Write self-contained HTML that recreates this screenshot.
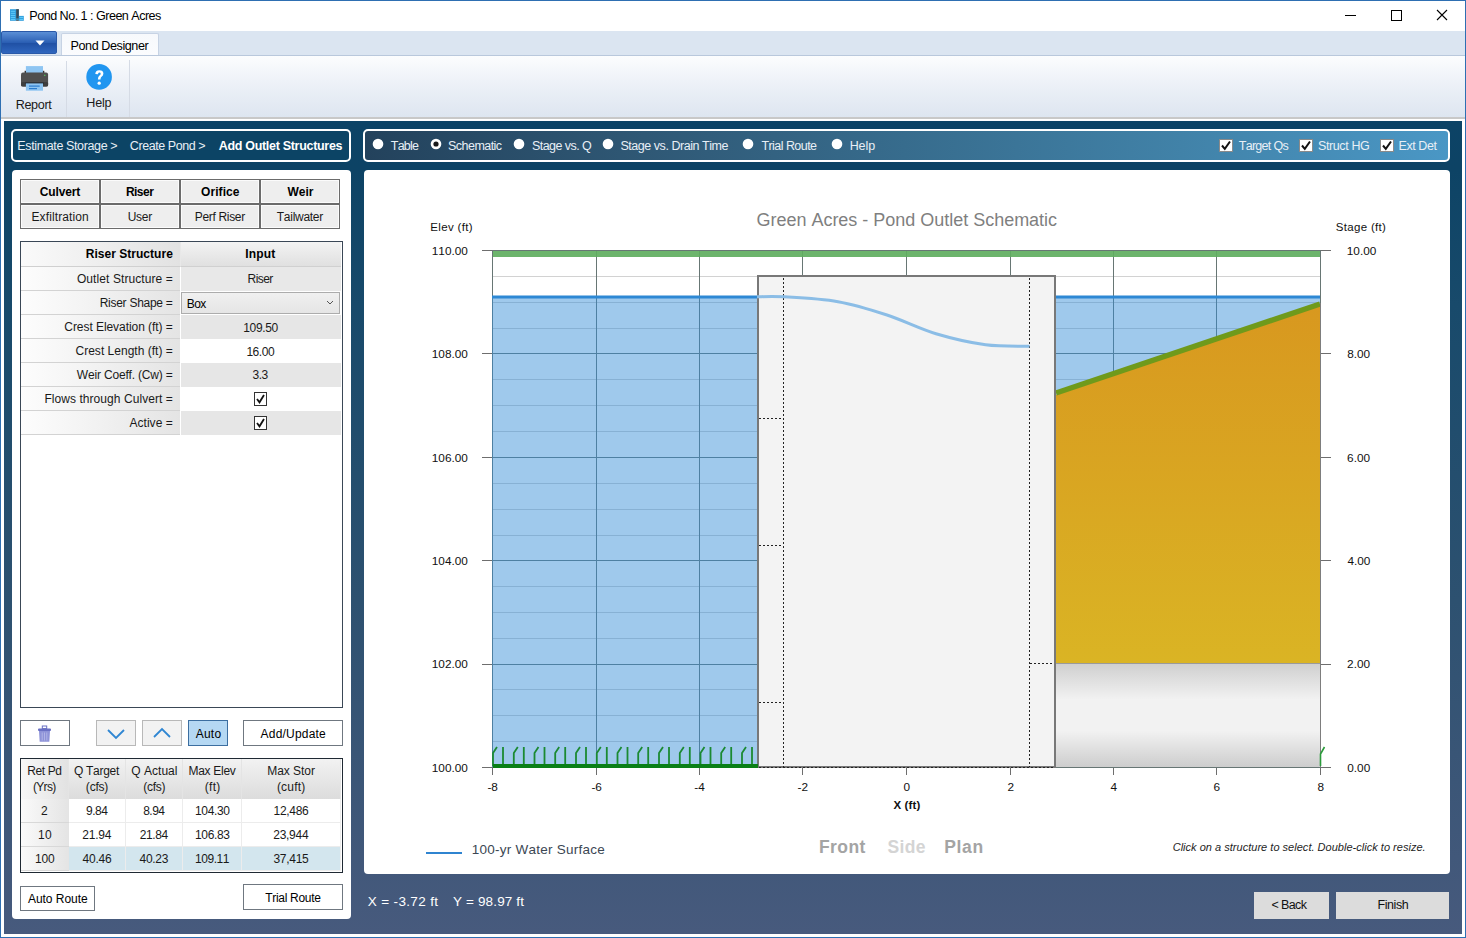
<!DOCTYPE html>
<html><head><meta charset="utf-8">
<style>
*{box-sizing:border-box;margin:0;padding:0}
html,body{width:1466px;height:938px;overflow:hidden;background:#fff}
body{position:relative;font-family:"Liberation Sans",sans-serif;font-size:12px;color:#000}
.a{position:absolute}
#win{left:0;top:0;width:1466px;height:938px;border:1px solid #2e6fb2;background:#fff}
#tabrow{left:1px;top:31px;width:1464px;height:24px;background:#dbe5f1}
#ribbon{left:1px;top:55px;width:1464px;height:63px;background:linear-gradient(#fcfdfe,#eef2f8 40%,#dde5f0);border-top:1px solid #b9c8dc}
#navy{left:4px;top:121px;width:1458px;height:813px;background:linear-gradient(#0c4366 0%,#0d4365 6%,#184a6b 22.6%,#2d5170 59%,#475a7d 100%)}
.crumb{border:2px solid #fff;border-radius:5px}
.panel{background:#fff;border-radius:4px}
.sb{position:absolute;background:#eeeeee}
.pl{position:absolute;left:21px;width:159px;height:24px;background:linear-gradient(90deg,#fdfdfd,#f1f1f1 50%,#e4e4e4);border-bottom:1px solid #d3d3d3}
.pv{position:absolute;left:181px;width:160px;height:24px}
.hd{background:linear-gradient(90deg,#fafafa,#eeeeee 50%,#e2e2e2);border-bottom:1px solid #d0d0d0}
.hdv{background:linear-gradient(#f3f3f3,#e0e0e0);border-bottom:1px solid #d0d0d0;left:180px;border-left:1px solid #e8e8e8;width:161px}
.rh{position:absolute;top:759px;height:40px;background:linear-gradient(#f2f2f2,#dcdcdc);border-right:1px solid #e4e4e4}
.rk{position:absolute;left:21px;width:48px;height:24px;background:linear-gradient(90deg,#fafafa,#e4e4e4);border-bottom:1px solid #d8d8d8}
.rc{position:absolute;height:24px;border-right:1px solid #ececec;border-bottom:1px solid #ececec}
.sel{background:#d3e6ee}
.btn{position:absolute;border:1px solid #adadad;background:#fff}
svg text{font-family:"Liberation Sans",sans-serif;font-kerning:none;font-variant-ligatures:none;white-space:pre}
</style></head><body>
<div id="win" class="a"></div>
<svg class="a" style="left:0;top:0" width="30" height="30" viewBox="0 0 30 30">
<rect x="10" y="9.2" width="6.1" height="11.6" fill="#2f9ddc"/>
<path d="M10.8 11.3H15.3M10.8 13.3H15.3M10.8 15.4H15.3M10.8 17.4H15.3M10.8 19.4H15.3" stroke="#62cdfb" stroke-width="1"/>
<rect x="16.1" y="9.1" width="2.8" height="11.7" fill="#2c4b5e"/>
<rect x="18.9" y="15.9" width="4.9" height="4.9" fill="#2f9ddc"/>
<path d="M19.4 17.4H23.3M19.4 19.4H23.3" stroke="#62cdfb" stroke-width="1"/>
<rect x="16.1" y="18.5" width="2.8" height="1.3" fill="#3a9fd4"/>
</svg>
<div class="a" style="left:1345px;top:15px;width:11px;height:1px;background:#000"></div>
<div class="a" style="left:1391px;top:10px;width:11px;height:11px;border:1px solid #000"></div>
<svg class="a" style="left:1436px;top:9px" width="12" height="12" viewBox="0 0 12 12"><path d="M1 1L11 11M11 1L1 11" stroke="#000" stroke-width="1.1"/></svg>
<div id="tabrow" class="a"></div>
<div class="a" style="left:1px;top:31px;width:56px;height:23px;background:linear-gradient(#5b8fd6,#2b5fb4 50%,#1f4fa3 51%,#2f66be);border:1px solid #2a59a8;border-radius:2px"></div>
<svg class="a" style="left:35px;top:40px" width="10" height="6" viewBox="0 0 10 6"><path d="M0.5 0.5H9.5L5 5.5Z" fill="#fff"/></svg>
<div class="a" style="left:61px;top:33px;width:98px;height:23px;background:linear-gradient(#f7f9fc,#fbfcfe);border:1px solid #c7d3e4;border-bottom:none;border-radius:2px 2px 0 0"></div>
<div id="ribbon" class="a"></div>
<div class="a" style="left:66px;top:61px;width:1px;height:57px;background:#d5dbe5"></div>
<div class="a" style="left:129px;top:60px;width:1px;height:58px;background:#d5dbe5"></div>
<div class="a" style="left:1px;top:117px;width:1464px;height:2px;background:#c8c8c8"></div>
<div class="a" style="left:1px;top:119px;width:1464px;height:2px;background:#fff"></div>
<svg class="a" style="left:0;top:50px" width="130" height="50" viewBox="0 50 130 50">
<rect x="25.9" y="66.1" width="17.1" height="8" fill="#8ec5f2"/>
<rect x="24.6" y="70.8" width="1.4" height="2.5" fill="#333"/><rect x="42.9" y="70.8" width="1.4" height="2.5" fill="#333"/>
<path d="M23 72.6H46.1Q48.1 72.6 48.1 74.6V84.6Q48.1 86.6 46.1 86.6H23Q21 86.6 21 84.6V74.6Q21 72.6 23 72.6Z" fill="#4f4f4f"/>
<rect x="21" y="82" width="27.1" height="4.6" rx="1.5" fill="#3e3e3e"/>
<rect x="25.2" y="82.6" width="18.6" height="1.2" fill="#1e2a36"/>
<rect x="44.1" y="74.7" width="1.3" height="1.3" fill="#4fbf5a"/>
<rect x="25.9" y="83.4" width="17.1" height="7.3" fill="#8ec5f2"/>
<rect x="29" y="85.5" width="10.7" height="1.2" fill="#2b7bcc"/><rect x="29" y="88" width="8" height="1.2" fill="#2b7bcc"/>
<circle cx="99.1" cy="76.9" r="12.8" fill="#2196f0"/>
<path d="M95.3 74.1Q95.3 70.2 99.3 70.2Q103.4 70.2 103.4 73.6Q103.4 75.7 101.3 77Q100.5 77.6 100.5 79.6H97.9Q97.9 76.7 99.5 75.6Q100.7 74.8 100.7 73.7Q100.7 72.6 99.3 72.6Q98 72.6 98 74.3Z" fill="#fff"/>
<circle cx="99.2" cy="83.2" r="1.65" fill="#fff"/>
</svg>
<div id="navy" class="a"></div>
<div class="a crumb" style="left:11px;top:129px;width:340px;height:33px;background:#0c4465"></div>
<div class="a crumb" style="left:363px;top:129px;width:1087px;height:33px;background:linear-gradient(90deg,#23425c 0%,#2f5875 25.8%,#376c8d 49.8%,#4182a8 75.4%,#4a97c5 100%)"></div>
<svg class="a" style="left:372px;top:138px" width="12" height="12" viewBox="0 0 12 12"><circle cx="6" cy="6" r="5.3" fill="#fff"/></svg>
<svg class="a" style="left:430px;top:138px" width="12" height="12" viewBox="0 0 12 12"><circle cx="6" cy="6" r="5.3" fill="#fff"/><circle cx="6" cy="6" r="2.6" fill="#1a1a1a"/></svg>
<svg class="a" style="left:513px;top:138px" width="12" height="12" viewBox="0 0 12 12"><circle cx="6" cy="6" r="5.3" fill="#fff"/></svg>
<svg class="a" style="left:602px;top:138px" width="12" height="12" viewBox="0 0 12 12"><circle cx="6" cy="6" r="5.3" fill="#fff"/></svg>
<svg class="a" style="left:742px;top:138px" width="12" height="12" viewBox="0 0 12 12"><circle cx="6" cy="6" r="5.3" fill="#fff"/></svg>
<svg class="a" style="left:831px;top:138px" width="12" height="12" viewBox="0 0 12 12"><circle cx="6" cy="6" r="5.3" fill="#fff"/></svg>
<svg class="a" style="left:1219px;top:139px" width="14" height="13" viewBox="0 0 14 13"><rect x="0.5" y="0.5" width="13" height="12" fill="#fff" stroke="#8a8a8a"/><path d="M3 6.5L5.8 9.8L11 2.5" fill="none" stroke="#111" stroke-width="2"/></svg>
<svg class="a" style="left:1299px;top:139px" width="14" height="13" viewBox="0 0 14 13"><rect x="0.5" y="0.5" width="13" height="12" fill="#fff" stroke="#8a8a8a"/><path d="M3 6.5L5.8 9.8L11 2.5" fill="none" stroke="#111" stroke-width="2"/></svg>
<svg class="a" style="left:1380px;top:139px" width="14" height="13" viewBox="0 0 14 13"><rect x="0.5" y="0.5" width="13" height="12" fill="#fff" stroke="#8a8a8a"/><path d="M3 6.5L5.8 9.8L11 2.5" fill="none" stroke="#111" stroke-width="2"/></svg>
<div class="a panel" style="left:12px;top:170px;width:339px;height:749px"></div>
<div class="a" style="left:20px;top:179px;width:320px;height:50px;background:#6b6b6b"></div>
<div class="sb" style="left:21px;top:180px;width:78px;height:23px;border:1px solid #fbfbfb"></div>
<div class="sb" style="left:21px;top:205px;width:78px;height:23px;border:1px solid #fbfbfb"></div>
<div class="sb" style="left:101px;top:180px;width:78px;height:23px;border:1px solid #fbfbfb"></div>
<div class="sb" style="left:101px;top:205px;width:78px;height:23px;border:1px solid #fbfbfb"></div>
<div class="sb" style="left:181px;top:180px;width:78px;height:23px;border:1px solid #fbfbfb"></div>
<div class="sb" style="left:181px;top:205px;width:78px;height:23px;border:1px solid #fbfbfb"></div>
<div class="sb" style="left:261px;top:180px;width:78px;height:23px;border:1px solid #fbfbfb"></div>
<div class="sb" style="left:261px;top:205px;width:78px;height:23px;border:1px solid #fbfbfb"></div>
<div class="a" style="left:20px;top:241px;width:323px;height:467px;border:1px solid #3a4756;background:#fff"></div>
<div class="pl hd" style="top:242px;height:25px"></div>
<div class="pv hdv" style="top:242px;height:25px"></div>
<div class="pl" style="top:267px"></div>
<div class="pv" style="top:267px;background:#e8e8e8"></div>
<div class="pl" style="top:291px"></div>
<div class="pv" style="top:291px;background:#fff"></div>
<div class="a" style="left:181px;top:292px;width:159px;height:22px;border:1px solid #acacac;background:linear-gradient(#f0f0f0,#e5e5e5)"></div>
<svg class="a" style="left:326px;top:300px" width="8" height="5" viewBox="0 0 8 5"><path d="M1 1L4 4L7 1" fill="none" stroke="#555" stroke-width="1"/></svg>
<div class="pl" style="top:315px"></div>
<div class="pv" style="top:315px;background:#e6e6e6"></div>
<div class="pl" style="top:339px"></div>
<div class="pv" style="top:339px;background:#fff"></div>
<div class="pl" style="top:363px"></div>
<div class="pv" style="top:363px;background:#e6e6e6"></div>
<div class="pl" style="top:387px"></div>
<div class="pv" style="top:387px;background:#fff"></div>
<div class="pl" style="top:411px"></div>
<div class="pv" style="top:411px;background:#e6e6e6"></div>
<svg class="a" style="left:254px;top:392px" width="13" height="14" viewBox="0 0 13 14"><rect x="0.5" y="0.5" width="12" height="13" fill="#fff" stroke="#333"/><path d="M3 7L5.5 10.3L10 3" fill="none" stroke="#111" stroke-width="1.8"/></svg>
<svg class="a" style="left:254px;top:416px" width="13" height="14" viewBox="0 0 13 14"><rect x="0.5" y="0.5" width="12" height="13" fill="#fff" stroke="#333"/><path d="M3 7L5.5 10.3L10 3" fill="none" stroke="#111" stroke-width="1.8"/></svg>
<div class="btn" style="left:20px;top:720px;width:50px;height:26px;border-color:#6f7780"></div>
<svg class="a" style="left:37px;top:725px" width="15" height="18" viewBox="0 0 15 18"><rect x="5.3" y="1" width="4.4" height="2.6" fill="none" stroke="#6a70c4" stroke-width="1"/><rect x="1" y="3.5" width="13" height="2.6" rx="1" fill="#6a70c4"/><path d="M2 6H13L12.3 16.7H2.7Z" fill="#8e93d8"/><path d="M5.2 7.5V15.5M7.5 7.5V15.5M9.8 7.5V15.5" stroke="#b4b7e8" stroke-width="0.9"/></svg>
<div class="btn" style="left:96px;top:720px;width:40px;height:26px;background:#f2f2f2;border-color:#b8b8b8"></div>
<svg class="a" style="left:106px;top:728px" width="20" height="12" viewBox="0 0 20 12"><path d="M2 2L10 10L18 2" fill="none" stroke="#2f86d2" stroke-width="1.8"/></svg>
<div class="btn" style="left:142px;top:720px;width:40px;height:26px;background:#f2f2f2;border-color:#b8b8b8"></div>
<svg class="a" style="left:152px;top:727px" width="20" height="12" viewBox="0 0 20 12"><path d="M2 10L10 2L18 10" fill="none" stroke="#2f86d2" stroke-width="1.8"/></svg>
<div class="btn" style="left:188px;top:720px;width:40px;height:26px;background:#b5d8f3;border-color:#3c6ea0"></div>
<div class="btn" style="left:243px;top:720px;width:100px;height:26px;border-color:#6f7780"></div>
<div class="a" style="left:20px;top:758px;width:323px;height:115px;border:1px solid #1f2933;background:#fff"></div>
<div class="rh" style="left:21px;width:48px;background:linear-gradient(90deg,#f7f7f7,#e2e2e2)"></div>
<div class="rh" style="left:69px;width:57px"></div>
<div class="rh" style="left:126px;width:57px"></div>
<div class="rh" style="left:183px;width:59px"></div>
<div class="rh" style="left:242px;width:99px"></div>
<div class="rk" style="top:799px"></div>
<div class="rk" style="top:823px"></div>
<div class="rk" style="top:847px"></div>
<div class="rc" style="left:69px;top:799px;width:57px"></div>
<div class="rc" style="left:126px;top:799px;width:57px"></div>
<div class="rc" style="left:183px;top:799px;width:59px"></div>
<div class="rc" style="left:242px;top:799px;width:99px"></div>
<div class="rc" style="left:69px;top:823px;width:57px"></div>
<div class="rc" style="left:126px;top:823px;width:57px"></div>
<div class="rc" style="left:183px;top:823px;width:59px"></div>
<div class="rc" style="left:242px;top:823px;width:99px"></div>
<div class="rc sel" style="left:69px;top:847px;width:57px"></div>
<div class="rc sel" style="left:126px;top:847px;width:57px"></div>
<div class="rc sel" style="left:183px;top:847px;width:59px"></div>
<div class="rc sel" style="left:242px;top:847px;width:99px"></div>
<div class="btn" style="left:20px;top:886px;width:75px;height:25px;border-color:#6f7780"></div>
<div class="btn" style="left:243px;top:884px;width:100px;height:26px;border-color:#6f7780"></div>

<div class="a panel" style="left:364px;top:170px;width:1086px;height:704px"></div>
<svg class="a" style="left:0;top:0" width="1466" height="938" viewBox="0 0 1466 938" shape-rendering="crispEdges">
<line x1="493" y1="276.5" x2="1320" y2="276.5" stroke="#d2d2d2"/>
<line x1="493" y1="302.5" x2="1320" y2="302.5" stroke="#d2d2d2"/>
<line x1="493" y1="328.5" x2="1320" y2="328.5" stroke="#d2d2d2"/>
<line x1="493" y1="379.5" x2="1320" y2="379.5" stroke="#d2d2d2"/>
<line x1="493" y1="405.5" x2="1320" y2="405.5" stroke="#d2d2d2"/>
<line x1="493" y1="431.5" x2="1320" y2="431.5" stroke="#d2d2d2"/>
<line x1="493" y1="483.5" x2="1320" y2="483.5" stroke="#d2d2d2"/>
<line x1="493" y1="509.5" x2="1320" y2="509.5" stroke="#d2d2d2"/>
<line x1="493" y1="535.5" x2="1320" y2="535.5" stroke="#d2d2d2"/>
<line x1="493" y1="586.5" x2="1320" y2="586.5" stroke="#d2d2d2"/>
<line x1="493" y1="612.5" x2="1320" y2="612.5" stroke="#d2d2d2"/>
<line x1="493" y1="638.5" x2="1320" y2="638.5" stroke="#d2d2d2"/>
<line x1="493" y1="689.5" x2="1320" y2="689.5" stroke="#d2d2d2"/>
<line x1="493" y1="715.5" x2="1320" y2="715.5" stroke="#d2d2d2"/>
<line x1="493" y1="741.5" x2="1320" y2="741.5" stroke="#d2d2d2"/>
<line x1="493" y1="767.5" x2="1320" y2="767.5" stroke="#677674"/>
<line x1="482" y1="767.5" x2="492" y2="767.5" stroke="#6e6e6e"/>
<line x1="1321" y1="767.5" x2="1331" y2="767.5" stroke="#6e6e6e"/>
<line x1="493" y1="664.5" x2="1320" y2="664.5" stroke="#677674"/>
<line x1="482" y1="664.5" x2="492" y2="664.5" stroke="#6e6e6e"/>
<line x1="1321" y1="664.5" x2="1331" y2="664.5" stroke="#6e6e6e"/>
<line x1="493" y1="560.5" x2="1320" y2="560.5" stroke="#677674"/>
<line x1="482" y1="560.5" x2="492" y2="560.5" stroke="#6e6e6e"/>
<line x1="1321" y1="560.5" x2="1331" y2="560.5" stroke="#6e6e6e"/>
<line x1="493" y1="457.5" x2="1320" y2="457.5" stroke="#677674"/>
<line x1="482" y1="457.5" x2="492" y2="457.5" stroke="#6e6e6e"/>
<line x1="1321" y1="457.5" x2="1331" y2="457.5" stroke="#6e6e6e"/>
<line x1="493" y1="353.5" x2="1320" y2="353.5" stroke="#677674"/>
<line x1="482" y1="353.5" x2="492" y2="353.5" stroke="#6e6e6e"/>
<line x1="1321" y1="353.5" x2="1331" y2="353.5" stroke="#6e6e6e"/>
<line x1="493" y1="250.5" x2="1320" y2="250.5" stroke="#677674"/>
<line x1="482" y1="250.5" x2="492" y2="250.5" stroke="#6e6e6e"/>
<line x1="1321" y1="250.5" x2="1331" y2="250.5" stroke="#6e6e6e"/>
<line x1="492.5" y1="250" x2="492.5" y2="768" stroke="#677674"/>
<line x1="492.5" y1="768" x2="492.5" y2="775" stroke="#6e6e6e"/>
<line x1="596.5" y1="250" x2="596.5" y2="768" stroke="#677674"/>
<line x1="596.5" y1="768" x2="596.5" y2="775" stroke="#6e6e6e"/>
<line x1="699.5" y1="250" x2="699.5" y2="768" stroke="#677674"/>
<line x1="699.5" y1="768" x2="699.5" y2="775" stroke="#6e6e6e"/>
<line x1="802.5" y1="250" x2="802.5" y2="768" stroke="#677674"/>
<line x1="802.5" y1="768" x2="802.5" y2="775" stroke="#6e6e6e"/>
<line x1="906.5" y1="250" x2="906.5" y2="768" stroke="#677674"/>
<line x1="906.5" y1="768" x2="906.5" y2="775" stroke="#6e6e6e"/>
<line x1="1010.5" y1="250" x2="1010.5" y2="768" stroke="#677674"/>
<line x1="1010.5" y1="768" x2="1010.5" y2="775" stroke="#6e6e6e"/>
<line x1="1113.5" y1="250" x2="1113.5" y2="768" stroke="#677674"/>
<line x1="1113.5" y1="768" x2="1113.5" y2="775" stroke="#6e6e6e"/>
<line x1="1216.5" y1="250" x2="1216.5" y2="768" stroke="#677674"/>
<line x1="1216.5" y1="768" x2="1216.5" y2="775" stroke="#6e6e6e"/>
<line x1="1320.5" y1="250" x2="1320.5" y2="768" stroke="#677674"/>
<line x1="1320.5" y1="768" x2="1320.5" y2="775" stroke="#6e6e6e"/>
</svg>
<svg class="a" style="left:0;top:0" width="1466" height="938" viewBox="0 0 1466 938">
<defs>
<linearGradient id="soil" x1="0" y1="0" x2="0" y2="1"><stop offset="0" stop-color="#d8981f"/><stop offset="1" stop-color="#dab424"/></linearGradient>
<linearGradient id="pipe" x1="0" y1="0" x2="0" y2="1"><stop offset="0" stop-color="#cfcfcf"/><stop offset="0.35" stop-color="#f2f2f2"/><stop offset="0.65" stop-color="#f2f2f2"/><stop offset="1" stop-color="#cdcdcd"/></linearGradient>
</defs>
<rect x="493" y="251" width="827" height="6" fill="#5fae5f" fill-opacity="0.92"/>
<rect x="492" y="297" width="266" height="470" fill="rgb(50,140,215)" fill-opacity="0.47"/>
<rect x="1055" y="297" width="265" height="100" fill="rgb(50,140,215)" fill-opacity="0.47"/>
<rect x="492" y="295.5" width="266" height="3" fill="#2d88d4"/>
<rect x="1055" y="295.5" width="265" height="3" fill="#2d88d4"/>
<path d="M1056 395L1320 305.5V663H1056Z" fill="url(#soil)"/>
<path d="M1056 393L1320 304" stroke="#6f9a1b" stroke-width="5.5"/>
<rect x="1055" y="663.5" width="265" height="103.5" fill="url(#pipe)"/>
<line x1="1055" y1="663.5" x2="1320" y2="663.5" stroke="#9a9a9a" stroke-width="1"/>
<line x1="1320.5" y1="303" x2="1320.5" y2="767" stroke="#7d7d7d" stroke-width="1"/>
<rect x="758" y="276" width="297" height="491" fill="#f3f3f3" stroke="#787878" stroke-width="2"/>
<line x1="783.5" y1="278" x2="783.5" y2="767" stroke="#222" stroke-width="1" stroke-dasharray="2,2"/>
<line x1="1029.5" y1="278" x2="1029.5" y2="767" stroke="#222" stroke-width="1" stroke-dasharray="2,2"/>
<line x1="759" y1="418.5" x2="783" y2="418.5" stroke="#222" stroke-width="1" stroke-dasharray="2,2"/>
<line x1="759" y1="545.5" x2="783" y2="545.5" stroke="#222" stroke-width="1" stroke-dasharray="2,2"/>
<line x1="759" y1="702.5" x2="783" y2="702.5" stroke="#222" stroke-width="1" stroke-dasharray="2,2"/>
<line x1="1030" y1="663.5" x2="1054" y2="663.5" stroke="#222" stroke-width="1" stroke-dasharray="2,2"/>
<line x1="759" y1="767.5" x2="1054" y2="767.5" stroke="#222" stroke-width="1" stroke-dasharray="2,2"/>
<path d="M757 296.8C761.5 296.8 770.2 296.0 783.7 296.8C797.2 297.6 820.8 298.7 838 301.7C855.2 304.7 870.7 309.7 887 315C903.3 320.3 919.6 328.8 936 333.7C952.4 338.6 970.0 342.6 985.6 344.7C1001.2 346.8 1022.2 345.9 1029.5 346.2" fill="none" stroke="#8bbde6" stroke-width="3"/>
<path d="M493.0 766V753L497.0 747M503.0 766V747 M513.8 766V753L517.8 747M523.8 766V747 M534.5 766V753L538.5 747M544.5 766V747 M555.2 766V753L559.2 747M565.2 766V747 M576.0 766V753L580.0 747M586.0 766V747 M596.8 766V753L600.8 747M606.8 766V747 M617.5 766V753L621.5 747M627.5 766V747 M638.2 766V753L642.2 747M648.2 766V747 M659.0 766V753L663.0 747M669.0 766V747 M679.8 766V753L683.8 747M689.8 766V747 M700.5 766V753L704.5 747M710.5 766V747 M721.2 766V753L725.2 747M731.2 766V747 M742.0 766V753L746.0 747M752.0 766V747" fill="none" stroke="#1b8a32" stroke-width="1.8"/>
<rect x="493" y="764" width="265" height="4" fill="#0a7f17"/>
<path d="M1320.5 766V754L1324.5 747" fill="none" stroke="#2a9a3a" stroke-width="1.6"/>
</svg>
<div class="a" style="left:426px;top:852px;width:36px;height:2px;background:#2f84d0"></div>
<div class="btn" style="left:1254px;top:892px;width:75px;height:27px;background:#dcdcdc;border-color:#dcdcdc"></div>
<div class="btn" style="left:1336px;top:892px;width:113px;height:27px;background:#dcdcdc;border-color:#dcdcdc"></div>
<svg class="a" style="left:0;top:0" width="1466" height="938" viewBox="0 0 1466 938">
<text x="29.37" y="20.00" font-size="12.6" fill="#000" letter-spacing="-0.530">Pond No. 1 : Green Acres</text>
<text x="70.57" y="50.00" font-size="12.6" fill="#000" letter-spacing="-0.434">Pond Designer</text>
<text x="15.67" y="108.70" font-size="12.6" fill="#1a1a1a" letter-spacing="-0.339">Report</text>
<text x="86.27" y="107.30" font-size="12.6" fill="#1a1a1a" letter-spacing="-0.217">Help</text>
<text x="17.37" y="150.20" font-size="12.5" fill="#e8eff6" letter-spacing="-0.377">Estimate Storage &gt;</text>
<text x="129.87" y="150.20" font-size="12.5" fill="#e8eff6" letter-spacing="-0.434">Create Pond &gt;</text>
<text x="218.69" y="150.20" font-size="12.5" fill="#fff" font-weight="bold" letter-spacing="-0.302">Add Outlet Structures</text>
<text x="390.82" y="150.30" font-size="12.5" fill="#e8eff6" letter-spacing="-0.808">Table</text>
<text x="448.03" y="150.30" font-size="12.5" fill="#e8eff6" letter-spacing="-0.532">Schematic</text>
<text x="531.93" y="150.30" font-size="12.5" fill="#e8eff6" letter-spacing="-0.544">Stage vs. Q</text>
<text x="620.43" y="150.30" font-size="12.5" fill="#e8eff6" letter-spacing="-0.457">Stage vs. Drain Time</text>
<text x="761.42" y="150.30" font-size="12.5" fill="#e8eff6" letter-spacing="-0.550">Trial Route</text>
<text x="849.67" y="150.30" font-size="12.5" fill="#e8eff6" letter-spacing="-0.086">Help</text>
<text x="1238.72" y="149.80" font-size="12.5" fill="#e8eff6" letter-spacing="-0.705">Target Qs</text>
<text x="1317.93" y="149.80" font-size="12.5" fill="#e8eff6" letter-spacing="-0.371">Struct HG</text>
<text x="1398.47" y="149.80" font-size="12.5" fill="#e8eff6" letter-spacing="-0.428">Ext Det</text>
<text x="39.71" y="196.00" font-size="12" fill="#000" font-weight="bold" letter-spacing="-0.118">Culvert</text>
<text x="125.90" y="196.00" font-size="12" fill="#000" font-weight="bold" letter-spacing="-0.508">Riser</text>
<text x="201.11" y="196.00" font-size="12" fill="#000" font-weight="bold" letter-spacing="0.048">Orifice</text>
<text x="287.49" y="196.00" font-size="12" fill="#000" font-weight="bold" letter-spacing="-0.037">Weir</text>
<text x="31.52" y="220.60" font-size="12" fill="#1a1a1a" letter-spacing="0.104">Exfiltration</text>
<text x="127.67" y="220.60" font-size="12" fill="#1a1a1a" letter-spacing="-0.237">User</text>
<text x="194.82" y="220.60" font-size="12" fill="#1a1a1a" letter-spacing="-0.329">Perf Riser</text>
<text x="276.83" y="220.60" font-size="12" fill="#1a1a1a" letter-spacing="-0.289">Tailwater</text>
<text x="85.70" y="258.00" font-size="12" fill="#000" font-weight="bold" letter-spacing="0.030">Riser Structure</text>
<text x="245.30" y="258.00" font-size="12" fill="#000" font-weight="bold" letter-spacing="0.132">Input</text>
<text x="76.93" y="282.80" font-size="12" fill="#1a1a1a" letter-spacing="0.087">Outlet Structure =</text>
<text x="99.72" y="306.80" font-size="12" fill="#1a1a1a" letter-spacing="-0.275">Riser Shape =</text>
<text x="64.29" y="330.80" font-size="12" fill="#1a1a1a" letter-spacing="-0.057">Crest Elevation (ft) =</text>
<text x="75.49" y="354.80" font-size="12" fill="#1a1a1a" letter-spacing="0.014">Crest Length (ft) =</text>
<text x="76.85" y="378.80" font-size="12" fill="#1a1a1a" letter-spacing="-0.180">Weir Coeff. (Cw) =</text>
<text x="44.42" y="402.80" font-size="12" fill="#1a1a1a" letter-spacing="0.060">Flows through Culvert =</text>
<text x="129.38" y="426.80" font-size="12" fill="#1a1a1a" letter-spacing="0.057">Active =</text>
<text x="247.62" y="283.30" font-size="12" fill="#1a1a1a" letter-spacing="-0.580">Riser</text>
<text x="186.82" y="307.50" font-size="12" fill="#000" letter-spacing="-0.582">Box</text>
<text x="243.19" y="331.50" font-size="12" fill="#1a1a1a" letter-spacing="-0.324">109.50</text>
<text x="246.39" y="355.50" font-size="12" fill="#1a1a1a" letter-spacing="-0.437">16.00</text>
<text x="252.44" y="379.30" font-size="12" fill="#1a1a1a" letter-spacing="-0.449">3.3</text>
<text x="195.68" y="737.60" font-size="12" fill="#000" letter-spacing="0.247">Auto</text>
<text x="260.58" y="737.60" font-size="12" fill="#000" letter-spacing="0.197">Add/Update</text>
<text x="27.22" y="774.80" font-size="12" fill="#1a1a1a" letter-spacing="-0.386">Ret Pd</text>
<text x="32.96" y="790.90" font-size="12" fill="#1a1a1a" letter-spacing="-0.676">(Yrs)</text>
<text x="74.03" y="774.80" font-size="12" fill="#1a1a1a" letter-spacing="-0.299">Q Target</text>
<text x="85.86" y="790.90" font-size="12" fill="#1a1a1a" letter-spacing="-0.209">(cfs)</text>
<text x="131.13" y="774.80" font-size="12" fill="#1a1a1a" letter-spacing="0.050">Q Actual</text>
<text x="143.36" y="790.90" font-size="12" fill="#1a1a1a" letter-spacing="-0.309">(cfs)</text>
<text x="188.52" y="774.80" font-size="12" fill="#1a1a1a" letter-spacing="-0.289">Max Elev</text>
<text x="204.66" y="790.90" font-size="12" fill="#1a1a1a" letter-spacing="0.343">(ft)</text>
<text x="267.22" y="774.80" font-size="12" fill="#1a1a1a" letter-spacing="-0.033">Max Stor</text>
<text x="276.96" y="790.90" font-size="12" fill="#1a1a1a" letter-spacing="0.171">(cuft)</text>
<text x="41.00" y="814.60" font-size="12" fill="#1a1a1a">2</text>
<text x="86.04" y="814.60" font-size="12" fill="#1a1a1a" letter-spacing="-0.480">9.84</text>
<text x="143.18" y="814.60" font-size="12" fill="#1a1a1a" letter-spacing="-0.494">8.94</text>
<text x="194.99" y="814.60" font-size="12" fill="#1a1a1a" letter-spacing="-0.344">104.30</text>
<text x="273.59" y="814.60" font-size="12" fill="#1a1a1a" letter-spacing="-0.312">12,486</text>
<text x="37.89" y="838.70" font-size="12" fill="#1a1a1a" letter-spacing="0.335">10</text>
<text x="82.20" y="838.70" font-size="12" fill="#1a1a1a" letter-spacing="-0.194">21.94</text>
<text x="139.70" y="838.70" font-size="12" fill="#1a1a1a" letter-spacing="-0.394">21.84</text>
<text x="194.99" y="838.70" font-size="12" fill="#1a1a1a" letter-spacing="-0.332">106.83</text>
<text x="273.30" y="838.70" font-size="12" fill="#1a1a1a" letter-spacing="-0.290">23,944</text>
<text x="34.99" y="862.50" font-size="12" fill="#1a1a1a" letter-spacing="-0.119">100</text>
<text x="82.52" y="862.50" font-size="12" fill="#1a1a1a" letter-spacing="-0.232">40.46</text>
<text x="139.62" y="862.50" font-size="12" fill="#1a1a1a" letter-spacing="-0.332">40.23</text>
<text x="194.99" y="862.50" font-size="12" fill="#1a1a1a" letter-spacing="-0.441">109.11</text>
<text x="273.44" y="862.50" font-size="12" fill="#1a1a1a" letter-spacing="-0.288">37,415</text>
<text x="27.98" y="902.60" font-size="12" fill="#000" letter-spacing="-0.043">Auto Route</text>
<text x="265.33" y="901.80" font-size="12" fill="#000" letter-spacing="-0.318">Trial Route</text>
<text x="756.49" y="225.50" font-size="18" fill="#7f7f7f" letter-spacing="-0.016">Green Acres - Pond Outlet Schematic</text>
<text x="430.26" y="230.70" font-size="11.5" fill="#111" letter-spacing="0.343">Elev (ft)</text>
<text x="1335.68" y="230.60" font-size="11.5" fill="#111" letter-spacing="0.326">Stage (ft)</text>
<text x="431.77" y="254.90" font-size="11.8" fill="#111">110.00</text>
<text x="1346.80" y="254.90" font-size="11.8" fill="#111">10.00</text>
<text x="431.77" y="357.90" font-size="11.8" fill="#111">108.00</text>
<text x="1347.19" y="357.90" font-size="11.8" fill="#111">8.00</text>
<text x="431.77" y="461.90" font-size="11.8" fill="#111">106.00</text>
<text x="1347.10" y="461.90" font-size="11.8" fill="#111">6.00</text>
<text x="431.77" y="564.90" font-size="11.8" fill="#111">104.00</text>
<text x="1347.43" y="564.90" font-size="11.8" fill="#111">4.00</text>
<text x="431.77" y="667.90" font-size="11.8" fill="#111">102.00</text>
<text x="1347.11" y="667.90" font-size="11.8" fill="#111">2.00</text>
<text x="431.77" y="771.90" font-size="11.8" fill="#111">100.00</text>
<text x="1347.24" y="771.90" font-size="11.8" fill="#111">0.00</text>
<text x="487.45" y="790.70" font-size="11.8" fill="#111">-8</text>
<text x="591.45" y="790.70" font-size="11.8" fill="#111">-6</text>
<text x="694.36" y="790.70" font-size="11.8" fill="#111">-4</text>
<text x="797.49" y="790.70" font-size="11.8" fill="#111">-2</text>
<text x="903.42" y="790.70" font-size="11.8" fill="#111">0</text>
<text x="1007.42" y="790.70" font-size="11.8" fill="#111">2</text>
<text x="1110.46" y="790.70" font-size="11.8" fill="#111">4</text>
<text x="1213.38" y="790.70" font-size="11.8" fill="#111">6</text>
<text x="1317.42" y="790.70" font-size="11.8" fill="#111">8</text>
<text x="893.40" y="809.30" font-size="11.5" fill="#111" font-weight="bold" letter-spacing="0.138">X (ft)</text>
<text x="471.87" y="853.90" font-size="13.5" fill="#3b4753" letter-spacing="0.244">100-yr Water Surface</text>
<text x="819.03" y="852.90" font-size="17.5" fill="#a4a4a4" font-weight="bold" letter-spacing="0.419">Front</text>
<text x="887.50" y="852.90" font-size="17.5" fill="#d4d4d4" font-weight="bold" letter-spacing="0.315">Side</text>
<text x="944.13" y="852.90" font-size="17.5" fill="#a4a4a4" font-weight="bold" letter-spacing="0.700">Plan</text>
<text x="1172.69" y="851.20" font-size="11" fill="#1e1e1e" font-style="italic" letter-spacing="0.020">Click on a structure to select. Double-click to resize.</text>
<text x="367.70" y="905.90" font-size="13.5" fill="#fff" letter-spacing="0.363">X = -3.72 ft</text>
<text x="453.00" y="905.90" font-size="13.5" fill="#fff" letter-spacing="0.143">Y = 98.97 ft</text>
<text x="1271.58" y="908.60" font-size="12.5" fill="#111" letter-spacing="-0.653">&lt; Back</text>
<text x="1377.47" y="908.60" font-size="12.5" fill="#111" letter-spacing="-0.421">Finish</text>
</svg>
</body></html>
